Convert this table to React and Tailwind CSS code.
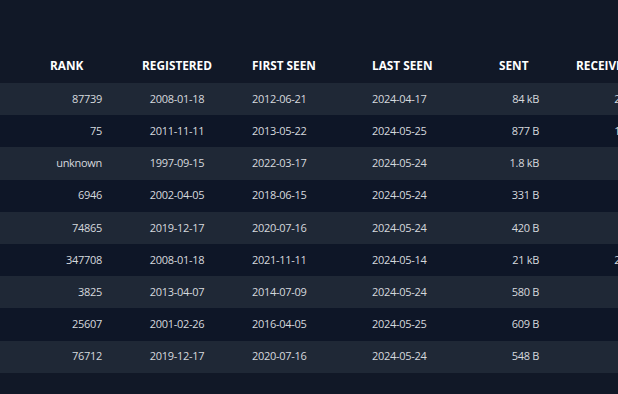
const rows = [
  { rank: '87739', registered: '2008-01-18', first: '2012-06-21', last: '2024-04-17', sent: '84 kB', received: '213 kB' },
  { rank: '75', registered: '2011-11-11', first: '2013-05-22', last: '2024-05-25', sent: '877 B', received: '156 kB' },
  { rank: 'unknown', registered: '1997-09-15', first: '2022-03-17', last: '2024-05-24', sent: '1.8 kB', received: '862 B' },
  { rank: '6946', registered: '2002-04-05', first: '2018-06-15', last: '2024-05-24', sent: '331 B', received: '745 B' },
  { rank: '74865', registered: '2019-12-17', first: '2020-07-16', last: '2024-05-24', sent: '420 B', received: '931 B' },
  { rank: '347708', registered: '2008-01-18', first: '2021-11-11', last: '2024-05-14', sent: '21 kB', received: '247 kB' },
  { rank: '3825', registered: '2013-04-07', first: '2014-07-09', last: '2024-05-24', sent: '580 B', received: '812 B' },
  { rank: '25607', registered: '2001-02-26', first: '2016-04-05', last: '2024-05-25', sent: '609 B', received: '799 B' },
  { rank: '76712', registered: '2019-12-17', first: '2020-07-16', last: '2024-05-24', sent: '548 B', received: '733 B' },
];

export default function App() {
  return (
    <div className="w-[618px] h-[394px] overflow-hidden bg-[#111827] pt-[49px] font-['Open_Sans',sans-serif]">
      <table className="table-fixed w-[720px] border-collapse">
        <colgroup>
          <col className="w-[118px]" />
          <col className="w-[118px]" />
          <col className="w-[120px]" />
          <col className="w-[127px]" />
          <col className="w-[72px]" />
          <col className="w-[165px]" />
        </colgroup>
        <thead>
          <tr className="h-[34px] text-[11.8px] font-bold text-white text-left">
            <th className="pl-[50px]">RANK</th>
            <th className="text-center">REGISTERED</th>
            <th className="pl-4">FIRST SEEN</th>
            <th className="pl-4">LAST SEEN</th>
            <th className="pl-4">SENT</th>
            <th className="pl-[21px]">RECEIVED</th>
          </tr>
        </thead>
        <tbody className="text-[11px] tracking-[-0.3px] text-[#d6d9de]">
          {rows.map((r, i) => (
            <tr key={i} className={`h-[32.2px] ${i % 2 === 0 ? 'bg-[#1f2836]' : 'bg-[#0e1627]'}`}>
              <td className="text-right pr-4">{r.rank}</td>
              <td className="text-center">{r.registered}</td>
              <td className="pl-4">{r.first}</td>
              <td className="pl-4">{r.last}</td>
              <td className="text-right pr-4">{r.sent}</td>
              <td className="text-right pr-[73px]">{r.received}</td>
            </tr>
          ))}
        </tbody>
      </table>
    </div>
  );
}
